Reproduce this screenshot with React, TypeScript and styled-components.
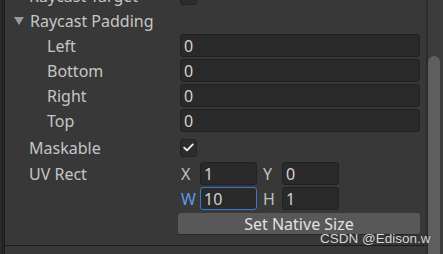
import React from 'react';
import styled, { createGlobalStyle } from 'styled-components';

const GlobalStyle = createGlobalStyle`
  html, body {
    margin: 0;
    padding: 0;
    background: #383838;
  }
  * {
    box-sizing: border-box;
  }
`;

const Window = styled.div`
  width: 443px;
  height: 254px;
  display: flex;
  background: #383838;
  overflow: hidden;
  font-family: 'Noto Sans', 'DejaVu Sans', sans-serif;
  font-size: 16px;
  color: #c6c6c6;
  position: relative;
`;

const LeftEdge = styled.div`
  width: 5px;
  flex: none;
  background: linear-gradient(
    to right,
    #2a2a2a 0 2px,
    #1e1e1e 2px 3px,
    #2a2a2a 3px 4px,
    #191919 4px 5px
  );
`;

const Main = styled.div`
  flex: 1;
  display: flex;
  flex-direction: column;
  min-width: 0;
`;

const Content = styled.div`
  height: 245px;
  flex: none;
  overflow: hidden;
  padding-right: 6px;
`;

const Rows = styled.div`
  margin-top: -17px;
  display: flex;
  flex-direction: column;
`;

const Row = styled.div<{ $gapTop?: number }>`
  height: 25px;
  display: flex;
  align-items: center;
  margin-top: ${(p) => p.$gapTop ?? 0}px;
`;

const Label = styled.div<{ $indent?: number }>`
  width: 175px;
  flex: none;
  padding-left: ${(p) => 24 + (p.$indent ?? 0) * 18}px;
  display: flex;
  align-items: center;
  white-space: nowrap;
  line-height: 1;
`;

const Foldout = styled.span`
  width: 0;
  height: 0;
  margin-left: -15px;
  margin-right: 6px;
  border-left: 5px solid transparent;
  border-right: 5px solid transparent;
  border-top: 8px solid #9a9a9a;
`;

const Field = styled.div<{ $width?: number; $focused?: boolean }>`
  height: 23px;
  flex: ${(p) => (p.$width ? 'none' : '1')};
  width: ${(p) => (p.$width ? `${p.$width}px` : 'auto')};
  background: #2a2a2a;
  border: 1px solid ${(p) => (p.$focused ? '#3a79c9' : '#212121')};
  border-radius: 3px;
  padding-left: 3px;
  display: flex;
  align-items: center;
  color: #d2d2d2;
  line-height: 1;
`;

const Check = styled.div`
  width: 17px;
  height: 18px;
  flex: none;
  background: #2c2c2c;
  border: 1px solid #222;
  border-radius: 3px;
  display: flex;
  align-items: center;
  justify-content: center;
`;

const VectorGroup = styled.div`
  display: flex;
  align-items: center;
`;

const AxisLabel = styled.span<{ $active?: boolean }>`
  width: 20px;
  padding-left: 1px;
  flex: none;
  color: ${(p) => (p.$active ? '#5c9ae6' : '#c0c0c0')};
  line-height: 1;
`;

const AxisSpacer = styled.span`
  width: 5px;
`;

const ButtonRow = styled.div`
  height: 22px;
  margin-top: 2px;
  padding-left: 173px;
  display: flex;
`;

const Button = styled.div`
  flex: 1;
  height: 22px;
  background: #585858;
  border-radius: 3px;
  border-bottom: 1px solid #2a2a2a;
  display: flex;
  align-items: center;
  justify-content: center;
  color: #e2e2e2;
  line-height: 1;
`;

const BottomLine = styled.div`
  height: 1px;
  flex: none;
  background: #1c1c1c;
`;

const Scrollbar = styled.div`
  width: 17px;
  flex: none;
  display: flex;
  background: #3b3b3b;
  border-left: 2px solid #2c2c2c;
  padding-top: 56px;
  padding-right: 3px;
`;

const Thumb = styled.div`
  flex: 1;
  background: #5e5e5e;
  border-radius: 6px 6px 0 0;
`;

const Watermark = styled.div`
  position: absolute;
  left: 320px;
  top: 231px;
  font-family: 'Liberation Sans', Arial, sans-serif;
  font-size: 13.5px;
  color: #d8d8d8;
  text-shadow: 0 0 1px #2a2a2a;
  white-space: nowrap;
`;

const CheckMark = () => (
  <svg width="11" height="9" viewBox="0 0 11 9">
    <path d="M1.2 4.6 L4 7.4 L9.8 1.4" fill="none" stroke="#f0f0f0" strokeWidth="1.8" strokeLinecap="round" strokeLinejoin="round" />
  </svg>
);

const padding = ['Left', 'Bottom', 'Right', 'Top'];

const App: React.FC = () => {
  return (
    <Window>
      <GlobalStyle />
      <LeftEdge />
      <Main>
        <Content>
          <Rows>
            <Row>
              <Label>Raycast Target</Label>
              <Check>
                <CheckMark />
              </Check>
            </Row>
            <Row>
              <Label>
                <Foldout />
                Raycast Padding
              </Label>
            </Row>
            {padding.map((name) => (
              <Row key={name}>
                <Label $indent={1}>{name}</Label>
                <Field>0</Field>
              </Row>
            ))}
            <Row $gapTop={2}>
              <Label>Maskable</Label>
              <Check>
                <CheckMark />
              </Check>
            </Row>
            <Row $gapTop={1}>
              <Label>UV Rect</Label>
              <VectorGroup>
                <AxisLabel>X</AxisLabel>
                <Field $width={57}>1</Field>
                <AxisSpacer />
                <AxisLabel>Y</AxisLabel>
                <Field $width={57}>0</Field>
              </VectorGroup>
            </Row>
            <Row>
              <Label />
              <VectorGroup>
                <AxisLabel $active>W</AxisLabel>
                <Field $width={57} $focused>10</Field>
                <AxisSpacer />
                <AxisLabel>H</AxisLabel>
                <Field $width={57}>1</Field>
              </VectorGroup>
            </Row>
            <ButtonRow>
              <Button>Set Native Size</Button>
            </ButtonRow>
          </Rows>
        </Content>
        <BottomLine />
      </Main>
      <Scrollbar>
        <Thumb />
      </Scrollbar>
      <Watermark>CSDN @Edison.w</Watermark>
    </Window>
  );
};

export default App;
